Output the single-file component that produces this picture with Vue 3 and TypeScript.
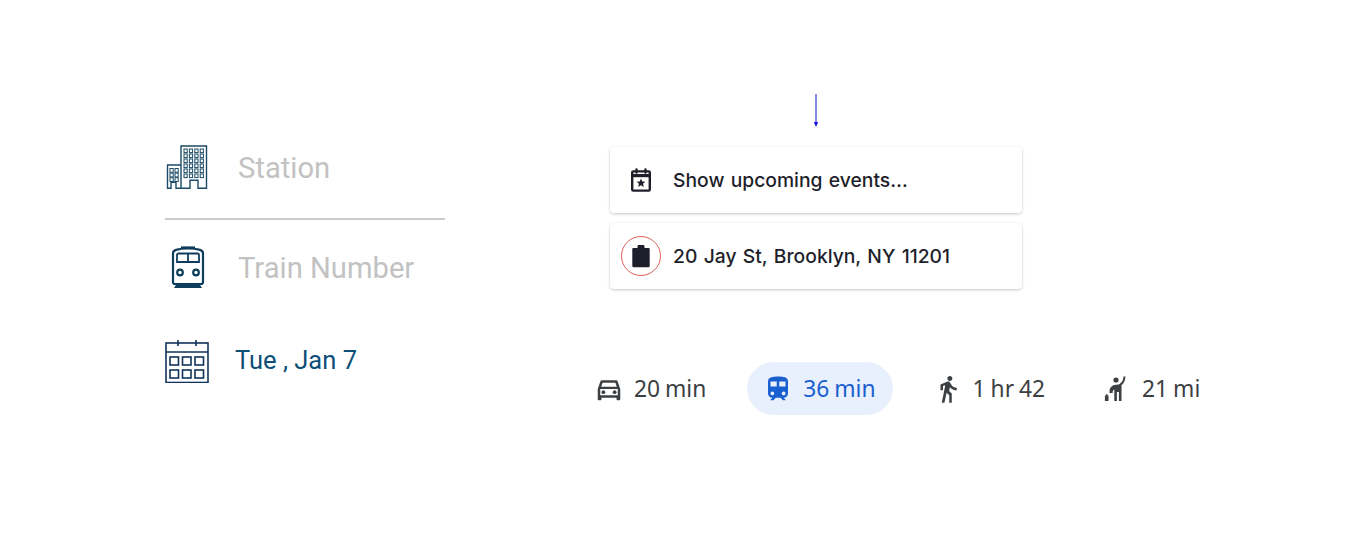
<template>
  <div class="page">
    <section class="form">
      <div class="row row-station">
        <span class="row-icon">
          <svg width="44" height="44" viewBox="0 0 44 44" fill="none" stroke="#1c4a66" stroke-width="1.400">
            <path d="M16 43.300V1h25.500v42.300h-8.500v-8h-8v8z" />
            <path d="M16 43.300H11v-6H6v6H2.500V20H16" />
            <rect v-for="w in bigWindows" :key="w.k" :x="w.x" :y="w.y" width="3.200" height="3.600" stroke-width="1" />
            <rect v-for="w in smallWindows" :key="w.k" :x="w.x" :y="w.y" width="3.200" height="3.800" stroke-width="1" />
          </svg>
        </span>
        <span class="placeholder">Station</span>
      </div>
      <div class="row row-train">
        <span class="row-icon">
          <svg width="44" height="44" viewBox="0 0 44 44" fill="none" stroke="#0f3d5c" stroke-width="2.200">
            <path d="M8 37V8.500c0-2 1-3 3-3.600C14 4 18 3.500 23 3.500s9 .5 12 1.400c2 .6 3 1.600 3 3.600V37c0 1.200-.8 2-2 2H10c-1.200 0-2-.8-2-2z" />
            <path d="M16 2.500h14" />
            <path d="M12 10c0-1 .6-1.500 1.500-1.500h19c.9 0 1.500.5 1.500 1.500v7H12zM23 8.500V17" stroke-width="1.800" />
            <circle cx="15" cy="27.500" r="2.800" />
            <circle cx="31" cy="27.500" r="2.800" />
            <path d="M9 43l2.500-4h23L37 43z" fill="#0f3d5c" stroke="none" />
          </svg>
        </span>
        <span class="placeholder">Train Number</span>
      </div>
      <div class="row row-date">
        <span class="row-icon">
          <svg width="44" height="46" viewBox="0 0 44 46" fill="none" stroke="#12335a" stroke-width="1.600">
            <rect x="1" y="6" width="42" height="39.500" />
            <path d="M1 15h42M13 3v6M31 3v6" />
            <rect v-for="c in calendarCells" :key="c.k" :x="c.x" :y="c.y" width="8.500" height="8" />
          </svg>
        </span>
        <span class="date">Tue , Jan 7</span>
      </div>
    </section>

    <section class="side">
      <svg class="arrow" width="12" height="33" viewBox="0 0 12 33">
        <path d="M6 0v29" stroke="#3c3cd6" stroke-width="1.200" />
        <path d="M3.800 28h4.400L6 33z" fill="#1414e0" />
      </svg>
      <div class="cards">
        <div class="card">
          <span class="card-icon">
            <svg width="24" height="26" viewBox="0 0 24 26" fill="none">
              <rect x="3.200" y="4.400" width="17.600" height="19.200" rx="1" stroke="#1e1f2b" stroke-width="2.400" />
              <path d="M3 7h18v3.200H3z" fill="#1e1f2b" />
              <path d="M7.500 2.500v3M16.500 2.500v3" stroke="#1e1f2b" stroke-width="2.400" stroke-linecap="round" />
              <path d="M12 11.600l1.300 2.900 3.100.3-2.400 2 .8 3.100-2.800-1.700-2.800 1.700.8-3.100-2.400-2 3.100-.3z" fill="#1e1f2b" />
            </svg>
          </span>
          <span>Show upcoming events…</span>
        </div>
        <div class="card">
          <span class="card-icon ringed">
            <svg width="24" height="26" viewBox="0 0 24 26">
              <path d="M4.500 5h4V3.500c0-.8.5-1.500 1.300-1.500h4.400c.8 0 1.300.7 1.300 1.500V5h4c.8 0 1.200.4 1.200 1.200V23c0 .8-.4 1.200-1.200 1.200h-15c-.8 0-1.200-.4-1.200-1.200V6.200C3.300 5.400 3.700 5 4.500 5z" fill="#1e1f2b" />
            </svg>
          </span>
          <span>20 Jay St, Brooklyn, NY 11201</span>
        </div>
      </div>

      <div class="modes">
        <div class="mode">
          <svg width="30" height="30" viewBox="0 0 24 24" fill="currentColor">
            <path d="M18.920 6.010C18.720 5.420 18.160 5 17.500 5h-11c-.66 0-1.210.42-1.420 1.010L3 12v8c0 .55.45 1 1 1h1c.55 0 1-.45 1-1v-1h12v1c0 .55.45 1 1 1h1c.55 0 1-.45 1-1v-8l-2.080-5.990zM6.850 7h10.290l1.080 3.110H5.770L6.850 7zM19 17H5v-5h14v5z" />
            <circle cx="7.500" cy="14.500" r="1.500" />
            <circle cx="16.500" cy="14.500" r="1.500" />
          </svg>
          <span>20 min</span>
        </div>
        <div class="mode active">
          <svg width="30" height="30" viewBox="0 0 24 24" fill="currentColor">
            <path d="M12 2c-4 0-8 .5-8 4v9.500C4 17.430 5.570 19 7.500 19L6 20.500v.5h2.230l2-2H14l2 2h2v-.5L16.500 19c1.930 0 3.500-1.570 3.500-3.500V6c0-3.500-3.580-4-8-4zM7.500 17c-.83 0-1.500-.67-1.500-1.500S6.670 14 7.500 14s1.500.67 1.500 1.500S8.330 17 7.500 17zm3.500-7H6V6h5v4zm2 0V6h5v4h-5zm3.500 7c-.83 0-1.500-.67-1.500-1.500s.67-1.500 1.500-1.500 1.500.67 1.500 1.500-.67 1.500-1.500 1.500z" />
          </svg>
          <span>36 min</span>
        </div>
        <div class="mode">
          <svg width="30" height="30" viewBox="0 0 24 24" fill="currentColor">
            <path d="M13.500 5.500c1.100 0 2-.9 2-2s-.9-2-2-2-2 .9-2 2 .9 2 2 2zM9.800 8.900L7 23h2.100l1.800-8 2.100 2v6h2v-7.500l-2.100-2 .6-3C14.800 12 16.800 13 19 13v-2c-1.900 0-3.500-1-4.300-2.400l-1-1.600c-.4-.6-1-1-1.700-1-.3 0-.5.100-.8.100L6 8.300V13h2V9.600l1.800-.7z" />
          </svg>
          <span>1 hr 42</span>
        </div>
        <div class="mode">
          <svg width="30" height="30" viewBox="-1.500 -1 30 30" fill="currentColor">
            <circle cx="12.500" cy="5" r="2.600" />
            <path d="M20 1.500h2c-.2 4-1.800 7-4 8.800V26h-2.600v-9h-2v9h-2.600V14.500c-1 .6-1.600 1.500-1.600 2.600v1H6v-2c0-3.500 3-6 6-6.300 2.200-.2 3.500-.1 4.300-1C18.500 7.500 19.800 5 20 1.500z" />
            <path d="M1.400 20.500h1v-1.300h1.600v1.300h1V26H1.400z" />
          </svg>
          <span>21 mi</span>
        </div>
      </div>
    </section>
  </div>
</template>

<script setup lang="ts">
interface Cell {
  k: string;
  x: number;
  y: number;
}

const grid = (cols: number, rows: number, x0: number, y0: number, dx: number, dy: number): Cell[] => {
  const cells: Cell[] = [];
  for (let r = 0; r < rows; r++) {
    for (let c = 0; c < cols; c++) {
      cells.push({ k: `${r}-${c}`, x: x0 + c * dx, y: y0 + r * dy });
    }
  }
  return cells;
};

const bigWindows = grid(4, 6, 19, 4, 5.4, 5);
const smallWindows = grid(2, 3, 5, 23.5, 5, 4.6);
const calendarCells = grid(3, 2, 5, 20, 12.5, 13);
</script>

<style>
html,
body {
  background: #fff;
}
</style>

<style scoped>
.page {
  display: flex;
  align-items: flex-start;
  height: 540px;
  padding-left: 165px;
  box-sizing: border-box;
  overflow: hidden;
}

.form {
  width: 280px;
  flex-shrink: 0;
  padding-top: 142px;
  font-family: Roboto, sans-serif;
}

.row {
  display: flex;
  align-items: center;
  height: 50px;
}

.row-icon {
  display: flex;
  width: 44px;
  flex-shrink: 0;
}

.row-station {
  box-sizing: content-box;
  padding-bottom: 26px;
  border-bottom: 2px solid #cbcbcb;
}

.row-train {
  margin-top: 22px;
}

.row-date {
  margin-top: 43px;
}

.placeholder {
  margin-left: 29px;
  padding-top: 2px;
  font-size: 29.2px;
  color: #c2c2c2;
}

.date {
  margin-left: 26px;
  font-size: 25.5px;
  color: #0d4f78;
}

.side {
  margin-left: 133px;
  padding-top: 94px;
  flex-shrink: 0;
}

.arrow {
  display: block;
  margin-left: 232px;
}

.cards {
  display: flex;
  flex-direction: column;
  gap: 10px;
  width: 412px;
  margin: 20px 0 0 32px;
}

.card {
  display: flex;
  align-items: center;
  gap: 12px;
  height: 66px;
  padding-left: 11px;
  border-radius: 4px;
  background: #fff;
  box-shadow: 0 1px 3px rgba(0, 0, 0, 0.22);
  font-family: Inter, sans-serif;
  font-size: 19.3px;
  font-weight: 500;
  word-spacing: 1.2px;
  color: #1e1f2b;
  white-space: nowrap;
}

.card-icon {
  display: flex;
  align-items: center;
  justify-content: center;
  width: 40px;
  height: 40px;
  box-sizing: border-box;
  border-radius: 50%;
}

.card-icon.ringed {
  border: 1.5px solid #d9605c;
}

.modes {
  display: flex;
  gap: 24px;
  margin-top: 73px;
}

.mode {
  display: flex;
  align-items: center;
  gap: 10px;
  height: 53px;
  padding: 0 17px 0 16px;
  border-radius: 27px;
  font-family: "Noto Sans", sans-serif;
  font-size: 22.8px;
  word-spacing: -1px;
  color: #3c4043;
  white-space: nowrap;
}

.mode svg {
  flex-shrink: 0;
}

.mode.active {
  background: #e8f0fe;
  color: #1a5fd0;
}
</style>
